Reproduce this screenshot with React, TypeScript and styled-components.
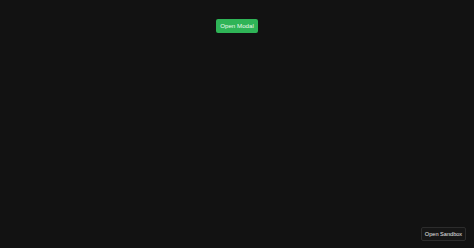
import React from "react";
import styled, { createGlobalStyle } from "styled-components";

const Global = createGlobalStyle`
  html, body { margin: 0; padding: 0; background: #121212; }
  body { font-family: "Liberation Sans", Arial, sans-serif; }
`;

const Page = styled.div`
  width: 474px;
  height: 248px;
  background: #121212;
  display: flex;
  flex-direction: column;
  align-items: center;
  position: relative;
`;

const Top = styled.div`
  padding-top: 19px;
  display: flex;
  justify-content: center;
`;

const ModalButton = styled.button`
  background: #2fb457;
  color: #eafbee;
  border: none;
  border-radius: 2px;
  height: 14px;
  width: 42px;
  padding: 0;
  font-family: "Liberation Sans", Arial, sans-serif;
  font-size: 6.2px;
  line-height: 14px;
  white-space: nowrap;
  cursor: pointer;
`;

const SandboxButton = styled.button`
  position: absolute;
  right: 8px;
  bottom: 7px;
  background: #151515;
  color: #e6e6e6;
  border: 1px solid #2c2c2c;
  border-radius: 2px;
  height: 14px;
  width: 45px;
  padding: 0;
  font-family: "Liberation Sans", Arial, sans-serif;
  font-size: 5.6px;
  line-height: 12px;
  white-space: nowrap;
`;

export default function App() {
  return (
    <Page>
      <Global />
      <Top>
        <ModalButton>Open Modal</ModalButton>
      </Top>
      <SandboxButton>Open Sandbox</SandboxButton>
    </Page>
  );
}
